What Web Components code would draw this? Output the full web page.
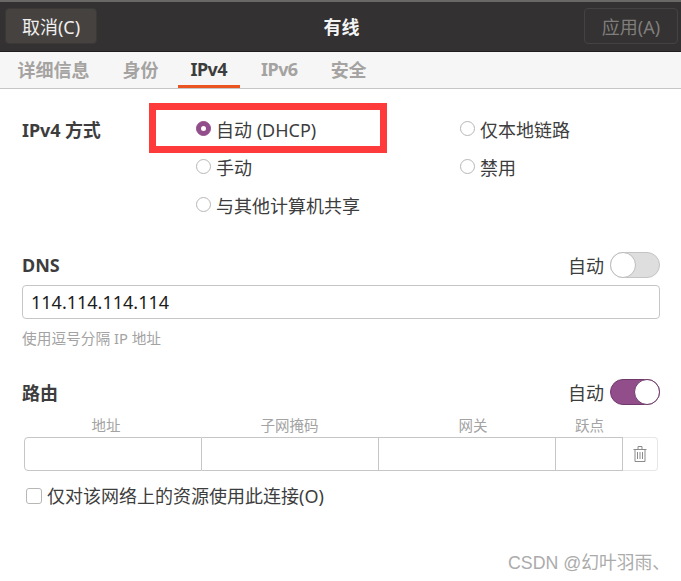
<!DOCTYPE html>
<html lang="zh-CN"><head><meta charset="utf-8">
<style>
html,body{margin:0;padding:0;background:#fff}
body{width:681px;height:581px;overflow:hidden;font-family:"Open Sans","Noto Sans CJK SC",sans-serif;color:#3d3d3d;position:relative}
</style></head><body>
<net-dialog></net-dialog>
<script>
const FONT='"Noto Sans","Noto Sans CJK SC",sans-serif';
function def(name,html,init){
  customElements.define(name,class extends HTMLElement{
    constructor(){super();this.attachShadow({mode:'open'}).innerHTML=html;}
    connectedCallback(){if(init)init(this);}
  });
}
def('hdr-button',`<style>
:host{display:flex;align-items:center;justify-content:center;box-sizing:border-box;height:36px;border-radius:4px;font:18px ${FONT};color:#f0eeee;background:#454240;border:1px solid #3b3937}
:host([disabled]){background:#343232;border-color:#454342;color:#807e7c}
</style><slot></slot>`);
def('header-bar',`<style>
:host{display:flex;align-items:center;justify-content:space-between;box-sizing:border-box;height:52px;padding:0 3px 1px 5px;background:#333131;border-top:2px solid #6a6866;border-bottom:1px solid #1f1e1e;position:relative}
.t{font:700 18px ${FONT};color:#f4f4f4;flex:1;text-align:center;padding-left:2px}
hdr-button.l{width:92px}hdr-button.r{width:94px}
</style><hdr-button class="l">取消(C)</hdr-button><div class="t">有线</div><hdr-button class="r" disabled>应用(A)</hdr-button>`);
def('tab-item',`<style>
:host{display:flex;align-items:center;box-sizing:border-box;height:36px;padding:0 12.5px;font:700 18px ${FONT};color:#a5a3a1;border-bottom:3px solid transparent;margin-bottom:-1px}
:host([active]){color:#3d3d3d;border-bottom-color:#e95420;margin-left:-1px;margin-right:1px}
:host([latin]){letter-spacing:-.55px}
</style><slot></slot>`);
def('tab-bar',`<style>
:host{display:flex;box-sizing:border-box;height:37px;padding:0 0 0 5px;gap:8px;background:#f6f6f6;border-bottom:1px solid #c6c6c6}
</style><tab-item>详细信息</tab-item><tab-item>身份</tab-item><tab-item active latin>IPv4</tab-item><tab-item latin>IPv6</tab-item><tab-item>安全</tab-item>`);
def('radio-opt',`<style>
:host{display:flex;align-items:center;height:38px;gap:5px;font:18px ${FONT};color:#3d3d3d;white-space:nowrap}
i{box-sizing:border-box;width:15px;height:15px;border-radius:50%;border:1px solid #b9b7b5;background:#fff;display:block;flex:none;margin-top:-1px}
:host([checked]) i{background:#924d8b;border-color:#924d8b;display:flex;align-items:center;justify-content:center}
:host([checked]) i::after{content:"";width:5px;height:5px;border-radius:50%;background:#fff}
</style><i></i><slot></slot>`);
def('toggle-sw',`<style>
:host{display:block;box-sizing:border-box;width:50px;height:26px;border-radius:13px;background:#dedede;border:1px solid #c4c4c4;position:relative}
b{position:absolute;left:-1px;top:-1px;box-sizing:border-box;width:26px;height:26px;border-radius:50%;background:#fff;border:1px solid #bdbdbd}
:host([on]){background:#924d8b;border-color:#6f3a6a}
:host([on]) b{left:auto;right:-1px;border-color:#6f3a6a}
</style><b></b>`);
def('sec-head',`<style>
:host{display:flex;align-items:center;justify-content:space-between;height:26px;font:18px ${FONT};color:#3d3d3d}
.h{font-weight:700}.a{display:flex;align-items:center;gap:6px}
</style><div class="h"><slot></slot></div><div class="a">自动<slot name="sw"></slot></div>`);
def('route-table',`<style>
:host{display:block}
.g{display:grid;grid-template-columns:178px 177px 177px 67px 35px}
.l{text-align:center;font:14.5px ${FONT};color:#a3a3a3;height:24px;line-height:24px}
.l.a{padding-right:14px}.l.m{padding-right:2px}.l.b{padding-left:11px}.l.e{padding-left:0}
.c{box-sizing:border-box;height:34px;border:1px solid #c6c6c6;border-left:0;background:#fff}
.c.f{border-left:1px solid #c6c6c6;border-radius:4px 0 0 4px}
.c.d{border-color:#e6e6e6;border-radius:0 4px 4px 0;display:flex;align-items:center;justify-content:center}
svg{display:block}
</style><div class="g"><div class="l a">地址</div><div class="l m">子网掩码</div><div class="l b">网关</div><div class="l e">跃点</div><div class="l"></div>
<div class="c f"></div><div class="c"></div><div class="c"></div><div class="c"></div>
<div class="c d"><svg width="14" height="16" viewBox="0 0 14 16" fill="none" stroke="#8b8b8b" stroke-width="1"><path d="M.5 3.5H13.5M5 3.5V.5H9V3.5M2 3.5V15.5H12V3.5M4.5 6V13M7 6V13M9.5 6V13"/></svg></div></div>`);
def('net-dialog',`<style>
:host{display:block;position:relative;width:681px;height:581px;background:#fff}
main{display:block;padding:32px 21px 0 22px}
.m{display:grid;grid-template-columns:174px 264px 1fr;height:114px;margin-bottom:17px}
.k{font:700 18px ${FONT};color:#3d3d3d;line-height:38px;margin-top:-10px;height:38px;letter-spacing:-.1px}
.m .c{margin-top:-11px}
.e{box-sizing:border-box;height:34px;margin-top:7px;border:1px solid #c6c6c6;border-radius:4px;padding:0 8px;display:flex;align-items:center;font:18px ${FONT};color:#1c1c1c}
.hint{font:14.7px ${FONT};color:#a3a3a3;margin-top:8px;height:22px;line-height:22px;margin-bottom:30px}
route-table{margin:8px 0 0 2px}
.chk{display:flex;align-items:center;gap:5px;margin:13px 0 0 4px;height:22px;font:18px ${FONT};color:#3d3d3d}
.chk i{box-sizing:border-box;display:block;width:16px;height:16px;border:1px solid #b9b7b5;border-radius:3px;margin-top:1px}
.red{position:absolute;left:149px;top:103px;width:238px;height:50px;box-sizing:border-box;border:7px solid #fe3a3a}
.wm{position:absolute;right:11px;top:548px;font:17.75px "Liberation Sans","Noto Sans CJK SC",sans-serif;color:#ababab;white-space:nowrap}
</style>
<header-bar></header-bar><tab-bar></tab-bar>
<main>
<div class="m"><div class="k">IPv4 方式</div>
<div class="c"><radio-opt checked>自动 (DHCP)</radio-opt><radio-opt>手动</radio-opt><radio-opt>与其他计算机共享</radio-opt></div>
<div class="c"><radio-opt>仅本地链路</radio-opt><radio-opt>禁用</radio-opt></div></div>
<sec-head>DNS<toggle-sw slot="sw"></toggle-sw></sec-head>
<div class="e">114.114.114.114</div>
<div class="hint">使用逗号分隔 IP 地址</div>
<sec-head>路由<toggle-sw slot="sw" on></toggle-sw></sec-head>
<route-table></route-table>
<div class="chk"><i></i>仅对该网络上的资源使用此连接(O)</div>
</main>
<div class="red"></div>
<div class="wm">CSDN @幻叶羽雨、</div>`);
</script>
</body></html>
